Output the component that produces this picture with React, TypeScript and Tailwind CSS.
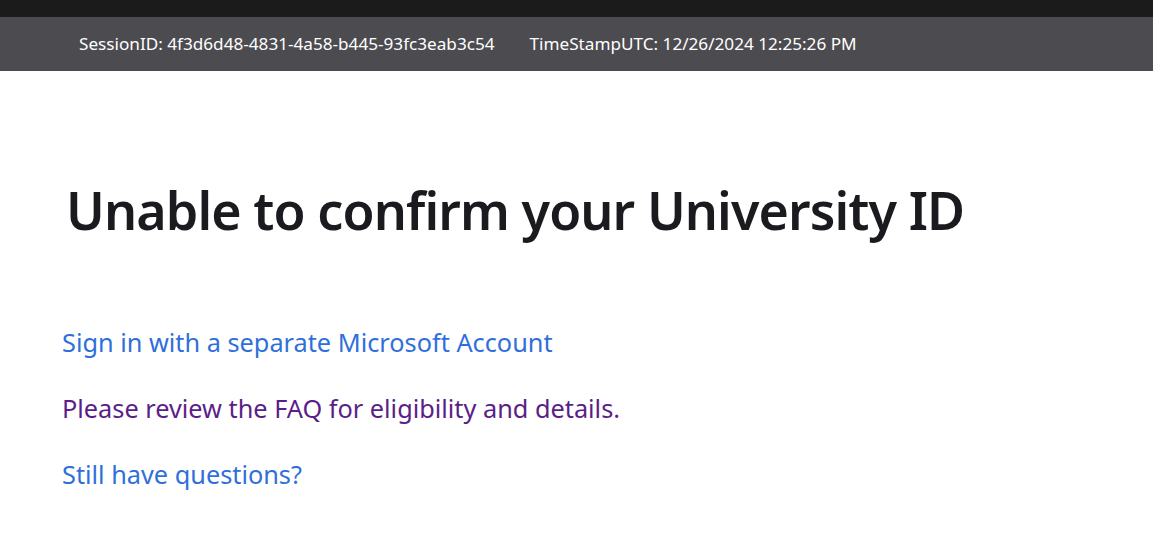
export default function App() {
  return (
    <div className="min-h-screen bg-white" style={{ fontFamily: '"Noto Sans", "Open Sans", sans-serif' }}>
      <div className="h-[17px] bg-[#1b1b1b]" />
      <header className="flex h-[54px] items-center gap-[35px] bg-[#4c4b50] pl-[79px] text-[17.15px] text-white">
        <span>SessionID: 4f3d6d48-4831-4a58-b445-93fc3eab3c54</span>
        <span>TimeStampUTC: 12/26/2024 12:25:26 PM</span>
      </header>
      <main className="px-[62px] pt-[107px]">
        <h1 className="pl-[4px] text-[52px] font-semibold leading-[64px] tracking-[-0.9px] text-[#1b1b1f]">
          Unable to confirm your University ID
        </h1>
        <div className="mt-[84px] flex flex-col gap-[34px] text-[25.3px] leading-[32px]">
          <a href="#" className="text-[#2f6fdb]">Sign in with a separate Microsoft Account</a>
          <a href="#" className="text-[#5b1e88]">Please review the FAQ for eligibility and details.</a>
          <a href="#" className="text-[#2f6fdb]">Still have questions?</a>
        </div>
      </main>
    </div>
  );
}
